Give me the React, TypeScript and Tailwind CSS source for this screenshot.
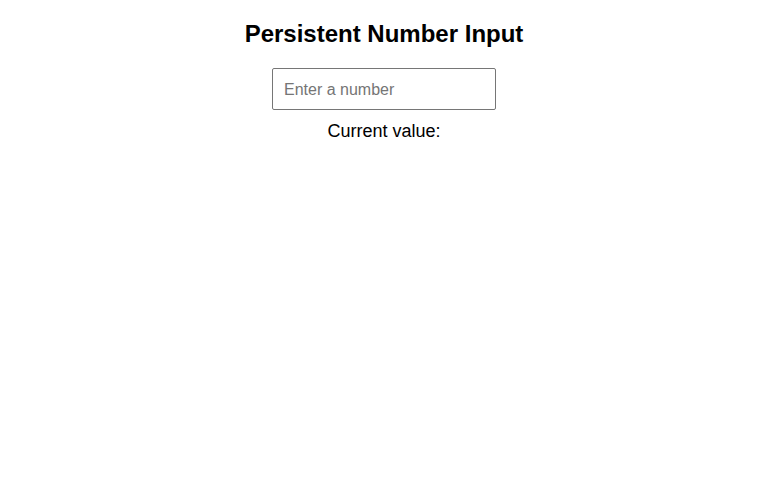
import { useEffect, useState } from "react";

export default function App() {
  const [value, setValue] = useState(() => localStorage.getItem("persistent-number") ?? "");

  useEffect(() => {
    localStorage.setItem("persistent-number", value);
  }, [value]);

  return (
    <div className="min-h-screen bg-white flex flex-col items-center pt-5 font-['Liberation_Sans',Arial,sans-serif] text-black">
      <h1 className="text-2xl font-bold leading-[28px]">Persistent Number Input</h1>
      <input
        type="number"
        value={value}
        onChange={(e) => setValue(e.target.value)}
        placeholder="Enter a number"
        className="mt-5 w-[224px] h-[42px] px-[11px] pt-[2px] border border-[#767676] rounded-[2px] text-base placeholder-[#757575] outline-none"
      />
      <p className="mt-[7px] text-lg leading-7">Current value: {value}</p>
    </div>
  );
}
